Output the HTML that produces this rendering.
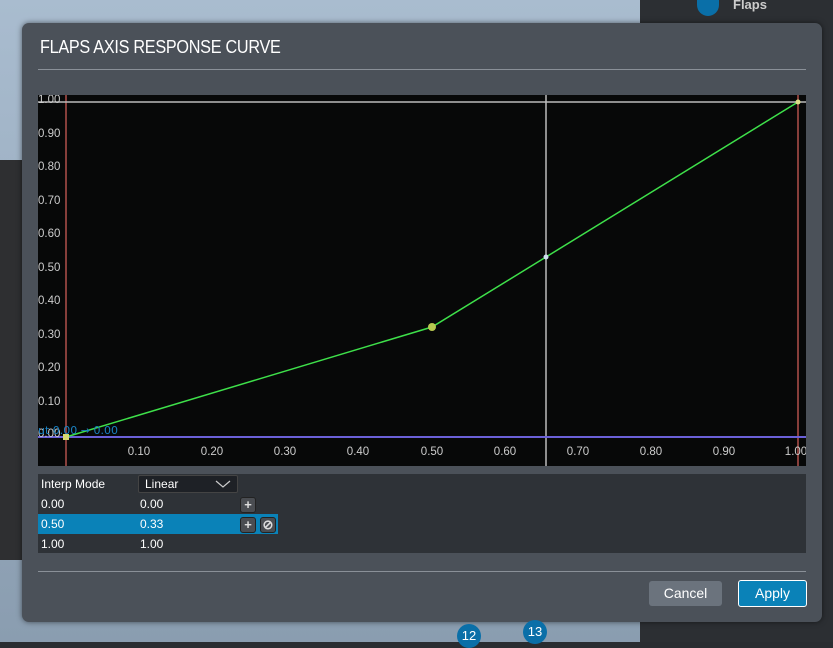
<!DOCTYPE html><html><head><style>
body{margin:0;width:833px;height:642px;overflow:hidden;background:#2a2d31;font-family:"Liberation Sans",sans-serif;position:relative}
.bg1{position:absolute;left:0;top:0;width:640px;height:642px;background:linear-gradient(#a9bccf,#8a9db0)}
.bg2{position:absolute;left:0;top:160px;width:30px;height:400px;background:#2e2f31}
.bg3{position:absolute;left:640px;top:0;width:193px;height:642px;background:#2c2f33}
.dlg{position:absolute;left:22px;top:23px;width:800px;height:599px;background:#4b5159;border-radius:7px;box-shadow:0 0 6px #0008}
.title{position:absolute;left:18px;top:14px;color:#fff;font-size:18px;letter-spacing:-0.3px;transform:scaleX(0.9);transform-origin:left}
.hr{position:absolute;left:16px;width:768px;height:1px;background:#8a9098}
.tbl{position:absolute;left:16px;top:451px;width:768px;height:79px;background:#2e3237;color:#fff;font-size:12px}
.row{position:absolute;left:0;height:20px;line-height:20px}
.btn{position:absolute;height:25px;line-height:25px;text-align:center;color:#fff;font-size:14px;border-radius:3px}
.sb{position:absolute;width:14px;height:14px;background:#4a4d52;border:1px solid #222;border-radius:3px;color:#ddd;font-size:13px;line-height:13px;text-align:center;font-weight:bold}
</style></head><body>
<div class="bg1"></div><div class="bg2"></div><div class="bg3"></div>
<div style="position:absolute;left:697px;top:0;width:22px;height:16px;border-radius:0 0 11px 11px;background:#0a6fa8"></div>
<div style="position:absolute;left:733px;top:-3px;color:#ccc;font-size:13px;font-weight:bold">Flaps</div>
<div class="dlg">
<div class="title">FLAPS AXIS RESPONSE CURVE</div>
<div class="hr" style="top:46px"></div>
<svg style="position:absolute;left:16px;top:72px" width="768" height="371" font-family="Liberation Sans" font-size="11.5" fill="#ccc">
<rect width="768" height="371" fill="#070808"/>
<line x1="28" y1="0" x2="28" y2="371" stroke="#b0514a" stroke-width="1.5"/>
<line x1="760" y1="0" x2="760" y2="371" stroke="#b0514a" stroke-width="1.5"/>
<line x1="0" y1="7" x2="768" y2="7" stroke="#bbb" stroke-width="1.5"/>
<line x1="508" y1="0" x2="508" y2="371" stroke="#bbb" stroke-width="1.5"/>
<line x1="0" y1="342" x2="768" y2="342" stroke="#6a60d8" stroke-width="2"/>
<polyline points="28,342 394,232 508,162 760,7" fill="none" stroke="#3ee04a" stroke-width="1.5"/>
<circle cx="394" cy="232" r="4" fill="#b8c850"/><rect x="25" y="339" width="6" height="6" fill="#d8d870"/>
<circle cx="508" cy="162" r="2.5" fill="#cde"/><circle cx="760" cy="7" r="2.5" fill="#dd8"/>
<text x="0" y="8">1.00</text><text x="0" y="42">0.90</text><text x="0" y="75">0.80</text><text x="0" y="109">0.70</text><text x="0" y="142">0.60</text><text x="0" y="176">0.50</text><text x="0" y="209">0.40</text><text x="0" y="243">0.30</text><text x="0" y="276">0.20</text><text x="0" y="310">0.10</text><text x="0" y="342">0.00</text>
<text x="0" y="339" fill="#1a80c0" font-family="DejaVu Sans" font-size="11">ut 0.00 → 0.00</text>
<g text-anchor="middle"><text x="101" y="360">0.10</text><text x="174" y="360">0.20</text><text x="247" y="360">0.30</text><text x="320" y="360">0.40</text><text x="394" y="360">0.50</text><text x="467" y="360">0.60</text><text x="540" y="360">0.70</text><text x="613" y="360">0.80</text><text x="686" y="360">0.90</text><text x="758" y="360">1.00</text></g>
</svg>
<div class="tbl">
<div class="row" style="top:0;left:3px">Interp Mode</div>
<div style="position:absolute;left:100px;top:1px;width:92px;height:16px;background:#1e2126;border:1px solid #444;border-radius:2px;line-height:16px;padding-left:6px">Linear<svg style="position:absolute;right:6px;top:4px" width="16" height="8"><polyline points="1,1 8,7 15,1" fill="none" stroke="#ccc" stroke-width="1.2"/></svg></div>
<div class="row" style="top:20px;left:3px">0.00</div><div class="row" style="top:20px;left:102px">0.00</div>
<div class="sb" style="left:202px;top:23px">+</div>
<div class="row" style="top:40px;left:0;width:240px;background:#0a82b8"></div>
<div class="row" style="top:40px;left:3px">0.50</div><div class="row" style="top:40px;left:102px">0.33</div>
<div class="sb" style="left:202px;top:43px">+</div><div class="sb" style="left:222px;top:43px">&#8856;</div>
<div class="row" style="top:60px;left:3px">1.00</div><div class="row" style="top:60px;left:102px">1.00</div>
</div>
<div class="hr" style="top:548px"></div>
<div class="btn" style="left:627px;top:558px;width:73px;background:#6b737d">Cancel</div>
<div class="btn" style="left:716px;top:557px;width:67px;background:#0a82b8;border:1px solid #fff">Apply</div>
</div>
<div style="position:absolute;left:457px;top:624px;width:24px;height:24px;border-radius:12px;background:#0a6fa8;color:#fff;font-size:13px;text-align:center;line-height:24px">12</div>
<div style="position:absolute;left:523px;top:620px;width:24px;height:24px;border-radius:12px;background:#0a6fa8;color:#fff;font-size:13px;text-align:center;line-height:24px">13</div>
</body></html>
